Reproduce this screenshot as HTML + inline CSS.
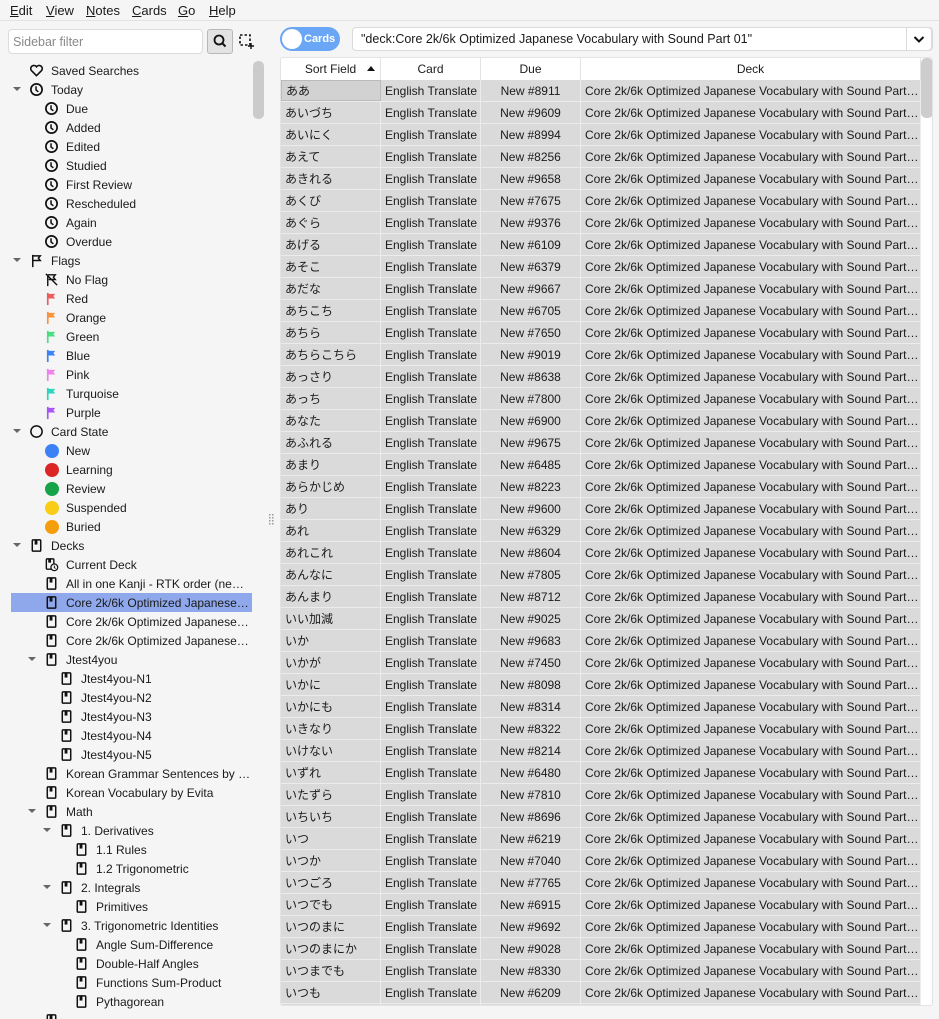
<!DOCTYPE html>
<html><head><meta charset="utf-8">
<style>
*{box-sizing:border-box;margin:0;padding:0}
html,body{width:939px;height:1019px;overflow:hidden}
body{background:#f5f5f5;font-family:"Liberation Sans","Noto Sans CJK JP",sans-serif;font-size:12px;line-height:14px;color:#1a1a1a;position:relative}
.menu{position:absolute;top:0;left:0;height:21px;width:939px;border-bottom:1px solid #e2e2e2}
.menu span{position:absolute;top:4px;font-size:13px}
.menu u{text-decoration:underline}
#filter{position:absolute;left:8px;top:29px;width:195px;height:25px;background:#fff;border:1px solid #dcdcdc;border-radius:4px;color:#888;padding:5px 4px;font-size:12.5px}
#sbtn{position:absolute;left:207px;top:29px;width:26px;height:25px;background:#e3e3e3;border:1px solid #b8b8b8;border-radius:3px}
#side{position:absolute;left:0;top:61px;width:252px}
.it{height:19px;position:relative;white-space:nowrap}
.it span{position:absolute;top:3px;line-height:14px}
.it svg{position:absolute;top:2px;width:15px;height:15px}
.ar{position:absolute;top:7px;width:0;height:0;border-left:4px solid transparent;border-right:4px solid transparent;border-top:4px solid #666}
.sel{background:#8fa8eb}
.dot{position:absolute;top:3px;width:14px;height:14px;border-radius:50%}
#sscroll{position:absolute;left:253px;top:61px;width:11px;height:58px;background:#cbcbcb;border-radius:5px}
#tog{position:absolute;left:280px;top:27px;width:60px;height:24px;background:#6aa6f6;border-radius:12px}
#tog i{position:absolute;left:2px;top:2px;width:20px;height:20px;background:#fff;border-radius:50%}
#tog b{position:absolute;left:24px;top:6px;color:#fff;font-size:11px;line-height:12px}
#q{position:absolute;left:352px;top:27px;width:581px;height:24px;background:#fff;border:1px solid #dadada;border-radius:4px;padding:4px 8px;font-size:12.5px}
#q .dd{position:absolute;right:0;top:-1px;width:26px;height:24px;border:1px solid #dadada;border-radius:0 4px 4px 0}
#tbl{position:absolute;left:280px;top:57px;width:653px;height:949px;background:#fff;border:1px solid #e3e3e3;border-radius:3px;overflow:hidden}
.hd{position:absolute;top:0;height:22px;border-right:1px solid #e3e3e3;text-align:center;padding-top:4px}
#rows{position:absolute;left:0;top:22px;width:640px}
.row{height:22px;position:relative;background:#dadada;border-bottom:1px solid #ececec}
.row div{position:absolute;top:0;height:21px;padding-top:4px;border-right:1px solid #ececec;white-space:nowrap;overflow:hidden;line-height:14px}
.c1{left:0;width:100px;padding-left:4px}
.c2{left:100px;width:100px;padding-left:4px}
.c3{left:200px;width:100px;text-align:center}
.c4{left:300px;width:340px;padding-left:4px}
#tscroll{position:absolute;left:640px;top:0;width:12px;height:60px;background:#cdcdcd;border-radius:5px}
</style></head><body>
<svg width="0" height="0" style="position:absolute">
<defs>
<symbol id="clk" viewBox="0 0 16 16"><circle cx="8" cy="8" r="6" fill="none" stroke="#111" stroke-width="1.8"/><path d="M7.5 4.5V8.5L10 10.5" fill="none" stroke="#111" stroke-width="1.6"/></symbol>
<symbol id="deck" viewBox="0 0 16 16"><rect x="3.5" y="2" width="9" height="12" rx="1" fill="none" stroke="#111" stroke-width="1.6"/><rect x="6" y="2" width="3" height="5" fill="#111"/></symbol>
<symbol id="flag" viewBox="0 0 16 16"><path d="M4 2V15" stroke="currentColor" stroke-width="1.8"/><path d="M4 3H12L10 5.5L12 8H4Z" fill="currentColor"/></symbol>
</defs></svg>

<div class="menu">
<span style="left:10px"><u>E</u>dit</span><span style="left:46px"><u>V</u>iew</span><span style="left:86px"><u>N</u>otes</span><span style="left:132px"><u>C</u>ards</span><span style="left:178px"><u>G</u>o</span><span style="left:209px"><u>H</u>elp</span>
</div>
<div id="filter">Sidebar filter</div>
<div id="sbtn"><svg width="24" height="23" viewBox="0 0 24 23"><circle cx="11" cy="10" r="4.5" fill="none" stroke="#111" stroke-width="1.8"/><path d="M14.2 13.2L17.5 16.5" stroke="#111" stroke-width="2"/></svg></div>
<svg style="position:absolute;left:238px;top:33px" width="17" height="17" viewBox="0 0 17 17"><rect x="2" y="2" width="10" height="10" fill="none" stroke="#111" stroke-width="1.6" stroke-dasharray="2.5 2"/><path d="M13 10V16M10 13H16" stroke="#111" stroke-width="1.4"/></svg>

<div id="side">
<div class="it"><svg style="left:29px" viewBox="0 0 16 16"><path d="M8 13.5L2.5 8A3 3 0 0 1 8 4A3 3 0 0 1 13.5 8Z" fill="none" stroke="#111" stroke-width="1.7"/></svg><span style="left:51px">Saved Searches</span></div>
<div class="it"><i class="ar" style="left:13px"></i><svg style="left:29px"><use href="#clk"/></svg><span style="left:51px">Today</span></div>
<div class="it"><svg style="left:44px"><use href="#clk"/></svg><span style="left:66px">Due</span></div>
<div class="it"><svg style="left:44px"><use href="#clk"/></svg><span style="left:66px">Added</span></div>
<div class="it"><svg style="left:44px"><use href="#clk"/></svg><span style="left:66px">Edited</span></div>
<div class="it"><svg style="left:44px"><use href="#clk"/></svg><span style="left:66px">Studied</span></div>
<div class="it"><svg style="left:44px"><use href="#clk"/></svg><span style="left:66px">First Review</span></div>
<div class="it"><svg style="left:44px"><use href="#clk"/></svg><span style="left:66px">Rescheduled</span></div>
<div class="it"><svg style="left:44px"><use href="#clk"/></svg><span style="left:66px">Again</span></div>
<div class="it"><svg style="left:44px"><use href="#clk"/></svg><span style="left:66px">Overdue</span></div>
<div class="it"><i class="ar" style="left:13px"></i><svg style="left:29px" viewBox="0 0 16 16"><path d="M4 2V15M4 3H12L10 5.5L12 8H4" fill="none" stroke="#111" stroke-width="1.6"/></svg><span style="left:51px">Flags</span></div>
<div class="it"><svg style="left:44px" viewBox="0 0 16 16"><path d="M4 3V15M4 3H12L10 5.5L12 8H5M2 2L14 14" fill="none" stroke="#111" stroke-width="1.5"/></svg><span style="left:66px">No Flag</span></div>
<div class="it"><svg style="left:44px;color:#ef5a5a"><use href="#flag"/></svg><span style="left:66px">Red</span></div>
<div class="it"><svg style="left:44px;color:#fb923c"><use href="#flag"/></svg><span style="left:66px">Orange</span></div>
<div class="it"><svg style="left:44px;color:#4ade80"><use href="#flag"/></svg><span style="left:66px">Green</span></div>
<div class="it"><svg style="left:44px;color:#3b82f6"><use href="#flag"/></svg><span style="left:66px">Blue</span></div>
<div class="it"><svg style="left:44px;color:#f080f0"><use href="#flag"/></svg><span style="left:66px">Pink</span></div>
<div class="it"><svg style="left:44px;color:#2dd4bf"><use href="#flag"/></svg><span style="left:66px">Turquoise</span></div>
<div class="it"><svg style="left:44px;color:#a855f7"><use href="#flag"/></svg><span style="left:66px">Purple</span></div>
<div class="it"><i class="ar" style="left:13px"></i><svg style="left:29px" viewBox="0 0 16 16"><circle cx="8" cy="8" r="6" fill="none" stroke="#111" stroke-width="1.6"/></svg><span style="left:51px">Card State</span></div>
<div class="it"><i class="dot" style="left:45px;background:#3b82f6"></i><span style="left:66px">New</span></div>
<div class="it"><i class="dot" style="left:45px;background:#dc2626"></i><span style="left:66px">Learning</span></div>
<div class="it"><i class="dot" style="left:45px;background:#16a34a"></i><span style="left:66px">Review</span></div>
<div class="it"><i class="dot" style="left:45px;background:#facc15"></i><span style="left:66px">Suspended</span></div>
<div class="it"><i class="dot" style="left:45px;background:#f59e0b"></i><span style="left:66px">Buried</span></div>
<div class="it"><i class="ar" style="left:13px"></i><svg style="left:29px"><use href="#deck"/></svg><span style="left:51px">Decks</span></div>
<div class="it"><svg style="left:44px" viewBox="0 0 16 16"><rect x="2.5" y="2" width="8" height="11" rx="1" fill="none" stroke="#111" stroke-width="1.5"/><rect x="4.5" y="2" width="3" height="4" fill="#111"/><circle cx="11" cy="11" r="3.6" fill="#f5f5f5" stroke="#111" stroke-width="1.3"/><path d="M11 9V11.3L12.3 12.3" fill="none" stroke="#111" stroke-width="1"/></svg><span style="left:66px">Current Deck</span></div>
<div class="it"><svg style="left:44px"><use href="#deck"/></svg><span style="left:66px">All in one Kanji - RTK order (ne…</span></div>
<div class="it sel" style="margin-left:11px;width:241px"><svg style="left:33px"><use href="#deck"/></svg><span style="left:55px">Core 2k/6k Optimized Japanese…</span></div>
<div class="it"><svg style="left:44px"><use href="#deck"/></svg><span style="left:66px">Core 2k/6k Optimized Japanese…</span></div>
<div class="it"><svg style="left:44px"><use href="#deck"/></svg><span style="left:66px">Core 2k/6k Optimized Japanese…</span></div>
<div class="it"><i class="ar" style="left:28px"></i><svg style="left:44px"><use href="#deck"/></svg><span style="left:66px">Jtest4you</span></div>
<div class="it"><svg style="left:59px"><use href="#deck"/></svg><span style="left:81px">Jtest4you-N1</span></div>
<div class="it"><svg style="left:59px"><use href="#deck"/></svg><span style="left:81px">Jtest4you-N2</span></div>
<div class="it"><svg style="left:59px"><use href="#deck"/></svg><span style="left:81px">Jtest4you-N3</span></div>
<div class="it"><svg style="left:59px"><use href="#deck"/></svg><span style="left:81px">Jtest4you-N4</span></div>
<div class="it"><svg style="left:59px"><use href="#deck"/></svg><span style="left:81px">Jtest4you-N5</span></div>
<div class="it"><svg style="left:44px"><use href="#deck"/></svg><span style="left:66px">Korean Grammar Sentences by …</span></div>
<div class="it"><svg style="left:44px"><use href="#deck"/></svg><span style="left:66px">Korean Vocabulary by Evita</span></div>
<div class="it"><i class="ar" style="left:28px"></i><svg style="left:44px"><use href="#deck"/></svg><span style="left:66px">Math</span></div>
<div class="it"><i class="ar" style="left:43px"></i><svg style="left:59px"><use href="#deck"/></svg><span style="left:81px">1. Derivatives</span></div>
<div class="it"><svg style="left:74px"><use href="#deck"/></svg><span style="left:96px">1.1 Rules</span></div>
<div class="it"><svg style="left:74px"><use href="#deck"/></svg><span style="left:96px">1.2 Trigonometric</span></div>
<div class="it"><i class="ar" style="left:43px"></i><svg style="left:59px"><use href="#deck"/></svg><span style="left:81px">2. Integrals</span></div>
<div class="it"><svg style="left:74px"><use href="#deck"/></svg><span style="left:96px">Primitives</span></div>
<div class="it"><i class="ar" style="left:43px"></i><svg style="left:59px"><use href="#deck"/></svg><span style="left:81px">3. Trigonometric Identities</span></div>
<div class="it"><svg style="left:74px"><use href="#deck"/></svg><span style="left:96px">Angle Sum-Difference</span></div>
<div class="it"><svg style="left:74px"><use href="#deck"/></svg><span style="left:96px">Double-Half Angles</span></div>
<div class="it"><svg style="left:74px"><use href="#deck"/></svg><span style="left:96px">Functions Sum-Product</span></div>
<div class="it"><svg style="left:74px"><use href="#deck"/></svg><span style="left:96px">Pythagorean</span></div>
<div class="it"><svg style="left:44px"><use href="#deck"/></svg></div>
</div>
<div id="sscroll"></div>
<svg style="position:absolute;left:269px;top:514px" width="5" height="12"><g fill="#999"><rect x="0" y="0" width="1.5" height="1.5"/><rect x="3" y="0" width="1.5" height="1.5"/><rect x="0" y="3" width="1.5" height="1.5"/><rect x="3" y="3" width="1.5" height="1.5"/><rect x="0" y="6" width="1.5" height="1.5"/><rect x="3" y="6" width="1.5" height="1.5"/><rect x="0" y="9" width="1.5" height="1.5"/><rect x="3" y="9" width="1.5" height="1.5"/></g></svg>

<div id="tog"><i></i><b>Cards</b></div>
<div id="q">"deck:Core 2k/6k Optimized Japanese Vocabulary with Sound Part 01"<div class="dd"><svg width="24" height="22" viewBox="0 0 24 22"><path d="M7.5 9L12 13.5L16.5 9" fill="none" stroke="#111" stroke-width="2"/></svg></div></div>

<div id="tbl">
<div class="hd" style="left:0;width:100px">Sort Field<span style="position:absolute;left:86px;top:8px;border-left:4px solid transparent;border-right:4px solid transparent;border-bottom:5px solid #111"></span></div>
<div class="hd" style="left:100px;width:100px">Card</div>
<div class="hd" style="left:200px;width:100px">Due</div>
<div class="hd" style="left:300px;width:340px">Deck</div>
<div id="rows">
<div class="row"><div class="c1" style="background:#d2d2d2;border:1px solid #bbb;padding-top:3px">ああ</div><div class="c2">English Translate</div><div class="c3">New #8911</div><div class="c4">Core 2k/6k Optimized Japanese Vocabulary with Sound Part…</div></div>
<div class="row"><div class="c1">あいづち</div><div class="c2">English Translate</div><div class="c3">New #9609</div><div class="c4">Core 2k/6k Optimized Japanese Vocabulary with Sound Part…</div></div>
<div class="row"><div class="c1">あいにく</div><div class="c2">English Translate</div><div class="c3">New #8994</div><div class="c4">Core 2k/6k Optimized Japanese Vocabulary with Sound Part…</div></div>
<div class="row"><div class="c1">あえて</div><div class="c2">English Translate</div><div class="c3">New #8256</div><div class="c4">Core 2k/6k Optimized Japanese Vocabulary with Sound Part…</div></div>
<div class="row"><div class="c1">あきれる</div><div class="c2">English Translate</div><div class="c3">New #9658</div><div class="c4">Core 2k/6k Optimized Japanese Vocabulary with Sound Part…</div></div>
<div class="row"><div class="c1">あくび</div><div class="c2">English Translate</div><div class="c3">New #7675</div><div class="c4">Core 2k/6k Optimized Japanese Vocabulary with Sound Part…</div></div>
<div class="row"><div class="c1">あぐら</div><div class="c2">English Translate</div><div class="c3">New #9376</div><div class="c4">Core 2k/6k Optimized Japanese Vocabulary with Sound Part…</div></div>
<div class="row"><div class="c1">あげる</div><div class="c2">English Translate</div><div class="c3">New #6109</div><div class="c4">Core 2k/6k Optimized Japanese Vocabulary with Sound Part…</div></div>
<div class="row"><div class="c1">あそこ</div><div class="c2">English Translate</div><div class="c3">New #6379</div><div class="c4">Core 2k/6k Optimized Japanese Vocabulary with Sound Part…</div></div>
<div class="row"><div class="c1">あだな</div><div class="c2">English Translate</div><div class="c3">New #9667</div><div class="c4">Core 2k/6k Optimized Japanese Vocabulary with Sound Part…</div></div>
<div class="row"><div class="c1">あちこち</div><div class="c2">English Translate</div><div class="c3">New #6705</div><div class="c4">Core 2k/6k Optimized Japanese Vocabulary with Sound Part…</div></div>
<div class="row"><div class="c1">あちら</div><div class="c2">English Translate</div><div class="c3">New #7650</div><div class="c4">Core 2k/6k Optimized Japanese Vocabulary with Sound Part…</div></div>
<div class="row"><div class="c1">あちらこちら</div><div class="c2">English Translate</div><div class="c3">New #9019</div><div class="c4">Core 2k/6k Optimized Japanese Vocabulary with Sound Part…</div></div>
<div class="row"><div class="c1">あっさり</div><div class="c2">English Translate</div><div class="c3">New #8638</div><div class="c4">Core 2k/6k Optimized Japanese Vocabulary with Sound Part…</div></div>
<div class="row"><div class="c1">あっち</div><div class="c2">English Translate</div><div class="c3">New #7800</div><div class="c4">Core 2k/6k Optimized Japanese Vocabulary with Sound Part…</div></div>
<div class="row"><div class="c1">あなた</div><div class="c2">English Translate</div><div class="c3">New #6900</div><div class="c4">Core 2k/6k Optimized Japanese Vocabulary with Sound Part…</div></div>
<div class="row"><div class="c1">あふれる</div><div class="c2">English Translate</div><div class="c3">New #9675</div><div class="c4">Core 2k/6k Optimized Japanese Vocabulary with Sound Part…</div></div>
<div class="row"><div class="c1">あまり</div><div class="c2">English Translate</div><div class="c3">New #6485</div><div class="c4">Core 2k/6k Optimized Japanese Vocabulary with Sound Part…</div></div>
<div class="row"><div class="c1">あらかじめ</div><div class="c2">English Translate</div><div class="c3">New #8223</div><div class="c4">Core 2k/6k Optimized Japanese Vocabulary with Sound Part…</div></div>
<div class="row"><div class="c1">あり</div><div class="c2">English Translate</div><div class="c3">New #9600</div><div class="c4">Core 2k/6k Optimized Japanese Vocabulary with Sound Part…</div></div>
<div class="row"><div class="c1">あれ</div><div class="c2">English Translate</div><div class="c3">New #6329</div><div class="c4">Core 2k/6k Optimized Japanese Vocabulary with Sound Part…</div></div>
<div class="row"><div class="c1">あれこれ</div><div class="c2">English Translate</div><div class="c3">New #8604</div><div class="c4">Core 2k/6k Optimized Japanese Vocabulary with Sound Part…</div></div>
<div class="row"><div class="c1">あんなに</div><div class="c2">English Translate</div><div class="c3">New #7805</div><div class="c4">Core 2k/6k Optimized Japanese Vocabulary with Sound Part…</div></div>
<div class="row"><div class="c1">あんまり</div><div class="c2">English Translate</div><div class="c3">New #8712</div><div class="c4">Core 2k/6k Optimized Japanese Vocabulary with Sound Part…</div></div>
<div class="row"><div class="c1">いい加減</div><div class="c2">English Translate</div><div class="c3">New #9025</div><div class="c4">Core 2k/6k Optimized Japanese Vocabulary with Sound Part…</div></div>
<div class="row"><div class="c1">いか</div><div class="c2">English Translate</div><div class="c3">New #9683</div><div class="c4">Core 2k/6k Optimized Japanese Vocabulary with Sound Part…</div></div>
<div class="row"><div class="c1">いかが</div><div class="c2">English Translate</div><div class="c3">New #7450</div><div class="c4">Core 2k/6k Optimized Japanese Vocabulary with Sound Part…</div></div>
<div class="row"><div class="c1">いかに</div><div class="c2">English Translate</div><div class="c3">New #8098</div><div class="c4">Core 2k/6k Optimized Japanese Vocabulary with Sound Part…</div></div>
<div class="row"><div class="c1">いかにも</div><div class="c2">English Translate</div><div class="c3">New #8314</div><div class="c4">Core 2k/6k Optimized Japanese Vocabulary with Sound Part…</div></div>
<div class="row"><div class="c1">いきなり</div><div class="c2">English Translate</div><div class="c3">New #8322</div><div class="c4">Core 2k/6k Optimized Japanese Vocabulary with Sound Part…</div></div>
<div class="row"><div class="c1">いけない</div><div class="c2">English Translate</div><div class="c3">New #8214</div><div class="c4">Core 2k/6k Optimized Japanese Vocabulary with Sound Part…</div></div>
<div class="row"><div class="c1">いずれ</div><div class="c2">English Translate</div><div class="c3">New #6480</div><div class="c4">Core 2k/6k Optimized Japanese Vocabulary with Sound Part…</div></div>
<div class="row"><div class="c1">いたずら</div><div class="c2">English Translate</div><div class="c3">New #7810</div><div class="c4">Core 2k/6k Optimized Japanese Vocabulary with Sound Part…</div></div>
<div class="row"><div class="c1">いちいち</div><div class="c2">English Translate</div><div class="c3">New #8696</div><div class="c4">Core 2k/6k Optimized Japanese Vocabulary with Sound Part…</div></div>
<div class="row"><div class="c1">いつ</div><div class="c2">English Translate</div><div class="c3">New #6219</div><div class="c4">Core 2k/6k Optimized Japanese Vocabulary with Sound Part…</div></div>
<div class="row"><div class="c1">いつか</div><div class="c2">English Translate</div><div class="c3">New #7040</div><div class="c4">Core 2k/6k Optimized Japanese Vocabulary with Sound Part…</div></div>
<div class="row"><div class="c1">いつごろ</div><div class="c2">English Translate</div><div class="c3">New #7765</div><div class="c4">Core 2k/6k Optimized Japanese Vocabulary with Sound Part…</div></div>
<div class="row"><div class="c1">いつでも</div><div class="c2">English Translate</div><div class="c3">New #6915</div><div class="c4">Core 2k/6k Optimized Japanese Vocabulary with Sound Part…</div></div>
<div class="row"><div class="c1">いつのまに</div><div class="c2">English Translate</div><div class="c3">New #9692</div><div class="c4">Core 2k/6k Optimized Japanese Vocabulary with Sound Part…</div></div>
<div class="row"><div class="c1">いつのまにか</div><div class="c2">English Translate</div><div class="c3">New #9028</div><div class="c4">Core 2k/6k Optimized Japanese Vocabulary with Sound Part…</div></div>
<div class="row"><div class="c1">いつまでも</div><div class="c2">English Translate</div><div class="c3">New #8330</div><div class="c4">Core 2k/6k Optimized Japanese Vocabulary with Sound Part…</div></div>
<div class="row"><div class="c1">いつも</div><div class="c2">English Translate</div><div class="c3">New #6209</div><div class="c4">Core 2k/6k Optimized Japanese Vocabulary with Sound Part…</div></div>
<div class="row"><div class="c1"></div><div class="c2"></div><div class="c3"></div><div class="c4"></div></div>
</div>
<div id="tscroll"></div>
</div>
</body></html>
